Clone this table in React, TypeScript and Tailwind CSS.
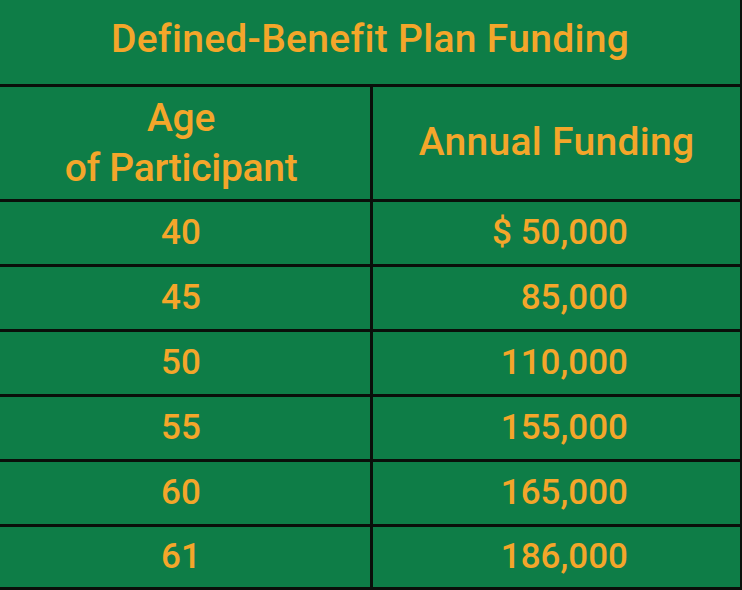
import React from 'react';

const rows = [
  { age: '40', amount: '$ 50,000' },
  { age: '45', amount: '85,000' },
  { age: '50', amount: '110,000' },
  { age: '55', amount: '155,000' },
  { age: '60', amount: '165,000' },
  { age: '61', amount: '186,000' },
];

export default function App() {
  return (
    <div
      className="w-[742px] h-[590px] bg-[#0a0f0a] flex flex-col gap-[3px] pb-[3px] pr-[2px] text-[#f4a62a] font-medium overflow-hidden"
      style={{ fontFamily: '"Roboto", "Liberation Sans", sans-serif' }}
    >
      <div className="h-[84px] bg-[#0e7d47] flex items-center justify-center text-[39px] tracking-[0.3px] pb-[6px]">
        Defined-Benefit Plan Funding
      </div>
      <div className="h-[112px] grid grid-cols-[370px_1fr] gap-[3px]">
        <div className="bg-[#0e7d47] flex flex-col items-center justify-center text-[39px] leading-[50px] tracking-[-0.3px] pr-[8px]">
          <span>Age</span>
          <span>of Participant</span>
        </div>
        <div className="bg-[#0e7d47] flex items-center justify-center text-[39px] tracking-[0.3px] pb-[2px]">
          Annual Funding
        </div>
      </div>
      {rows.map((r, i) => (
        <div key={r.age} className={`grid grid-cols-[370px_1fr] gap-[3px] ${i === 5 ? 'h-[60px]' : 'h-[62px]'}`}>
          <div className="bg-[#0e7d47] flex items-center justify-center text-[35px] pr-[8px]">{r.age}</div>
          <div className="bg-[#0e7d47] flex items-center justify-end text-[35px] pr-[112px]">{r.amount}</div>
        </div>
      ))}
    </div>
  );
}
